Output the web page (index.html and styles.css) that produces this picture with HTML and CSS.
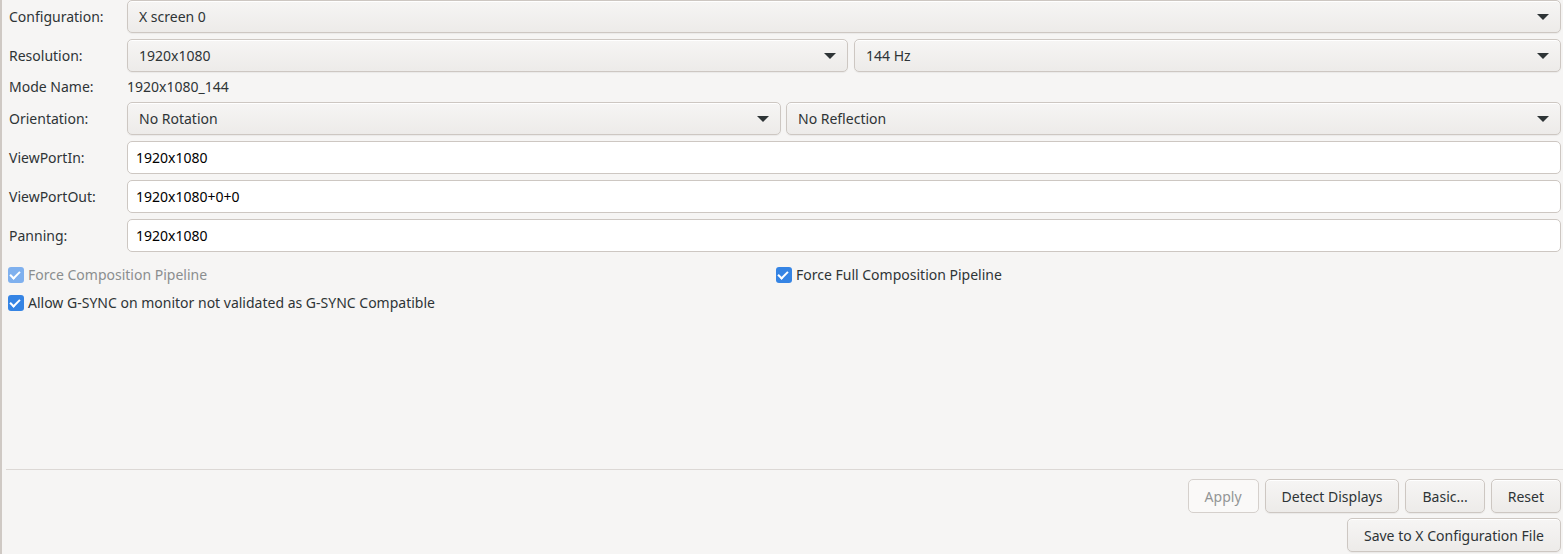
FILE: index.html
```html
<!DOCTYPE html>
<html lang="en">
<head>
  <meta charset="UTF-8">
  <title>X Server Display Configuration</title>
  <link rel="stylesheet" href="styles.css">
</head>
<body>
  <div class="window">
    <div class="page">
      <!-- Display settings form -->
      <div class="form">
        <div class="label">Configuration:</div>
        <div class="field">
          <div class="combo"><span>X screen 0</span><i class="arrow"></i></div>
        </div>

        <div class="label">Resolution:</div>
        <div class="field split-res">
          <div class="combo"><span>1920x1080</span><i class="arrow"></i></div>
          <div class="combo"><span>144 Hz</span><i class="arrow"></i></div>
        </div>

        <div class="label">Mode Name:</div>
        <div class="field plain">1920x1080_144</div>

        <div class="label">Orientation:</div>
        <div class="field split-orient">
          <div class="combo"><span>No Rotation</span><i class="arrow"></i></div>
          <div class="combo"><span>No Reflection</span><i class="arrow"></i></div>
        </div>

        <div class="label">ViewPortIn:</div>
        <div class="field"><div class="entry">1920x1080</div></div>

        <div class="label">ViewPortOut:</div>
        <div class="field"><div class="entry">1920x1080+0+0</div></div>

        <div class="label">Panning:</div>
        <div class="field"><div class="entry">1920x1080</div></div>
      </div>

      <!-- Composition toggles -->
      <div class="checks">
        <label class="check disabled"><i class="box"></i>Force Composition Pipeline</label>
        <label class="check"><i class="box"></i>Force Full Composition Pipeline</label>
        <label class="check wide"><i class="box"></i>Allow G-SYNC on monitor not validated as G-SYNC Compatible</label>
      </div>

      <div class="spacer"></div>
      <div class="separator"></div>

      <div class="actions">
        <div class="button-row">
          <button class="btn" disabled>Apply</button>
          <button class="btn">Detect Displays</button>
          <button class="btn">Basic...</button>
          <button class="btn">Reset</button>
        </div>
        <div class="button-row">
          <button class="btn">Save to X Configuration File</button>
        </div>
      </div>
    </div>
  </div>
</body>
</html>
```

FILE: styles.css
```css
html, body {
  margin: 0;
  padding: 0;
  height: 100%;
}

body {
  background-color: #f6f5f4;
  color: #2e3436;
  font-family: "Noto Sans", "DejaVu Sans", sans-serif;
  font-size: 14px;
  line-height: 18px;
  overflow: hidden;
}

.window {
  height: 100%;
  border-left: 2px solid #cfc9c4;
  box-sizing: border-box;
}

.page {
  height: 100%;
  display: flex;
  flex-direction: column;
  padding: 0 2px 2px 2px;
  box-sizing: border-box;
}

/* Label / field grid */
.form {
  display: grid;
  grid-template-columns: 123px 1fr;
  row-gap: 6px;
}

.label {
  padding-left: 5px;
  display: flex;
  align-items: center;
}

.field {
  display: flex;
  gap: 6px;
  min-width: 0;
}

.field.plain {
  height: 18px;
  align-items: center;
}

.split-res .combo:first-child {
  flex: 0 0 721px;
}

.split-orient .combo:first-child {
  flex: 0 0 654px;
}

.split-orient .combo:last-child {
  margin-left: -1px;
}

.combo {
  flex: 1;
  height: 33px;
  box-sizing: border-box;
  border: 1px solid #cdc7c2;
  border-radius: 5px;
  background: linear-gradient(to bottom, #f6f5f4, #edebe9);
  box-shadow: inset 0 1px #ffffff, 0 1px 1px rgba(0, 0, 0, 0.05);
  display: flex;
  align-items: center;
  justify-content: space-between;
  padding: 0 11px 0 11px;
}

.arrow {
  width: 0;
  height: 0;
  border-left: 6px solid transparent;
  border-right: 6px solid transparent;
  border-top: 6px solid #2e3436;
}

.entry {
  flex: 1;
  height: 33px;
  box-sizing: border-box;
  border: 1px solid #cdc7c2;
  border-radius: 5px;
  background-color: #ffffff;
  display: flex;
  align-items: center;
  padding-left: 8px;
  color: #000000;
}

/* Checkboxes */
.checks {
  display: grid;
  grid-template-columns: 768px 1fr;
  row-gap: 12px;
  margin-top: 15px;
  padding-left: 4px;
}

.check {
  display: flex;
  align-items: center;
  gap: 4px;
  height: 16px;
}

.check.wide {
  grid-column: 1 / 3;
}

.box {
  width: 16px;
  height: 16px;
  border-radius: 3px;
  background-color: #3584e4;
  position: relative;
}

.box::after {
  content: "";
  position: absolute;
  left: 4px;
  top: 2px;
  width: 4px;
  height: 8px;
  border-right: 2px solid #ffffff;
  border-bottom: 2px solid #ffffff;
  transform: rotate(45deg);
}

.check.disabled {
  color: #8b8e8f;
}

.check.disabled .box {
  background-color: #7fb0ee;
}

.spacer {
  flex: 1;
}

.separator {
  height: 1px;
  background-color: #dcd8d5;
  margin-left: 2px;
  margin-right: -2px;
}

/* Bottom buttons */
.actions {
  display: flex;
  flex-direction: column;
  align-items: flex-end;
  gap: 5px;
  margin-top: 9px;
}

.button-row {
  display: flex;
  gap: 6px;
}

.btn {
  height: 34px;
  box-sizing: border-box;
  border: 1px solid #cdc7c2;
  border-radius: 5px;
  background: linear-gradient(to bottom, #f6f5f4, #edebe9);
  box-shadow: inset 0 1px #ffffff, 0 1px 1px rgba(0, 0, 0, 0.05);
  font-family: inherit;
  font-size: 14px;
  color: #2e3436;
  padding: 0 16px;
}

.btn:disabled {
  background: #faf9f8;
  color: #929595;
  border-color: #d5d0cc;
  box-shadow: none;
}
```
